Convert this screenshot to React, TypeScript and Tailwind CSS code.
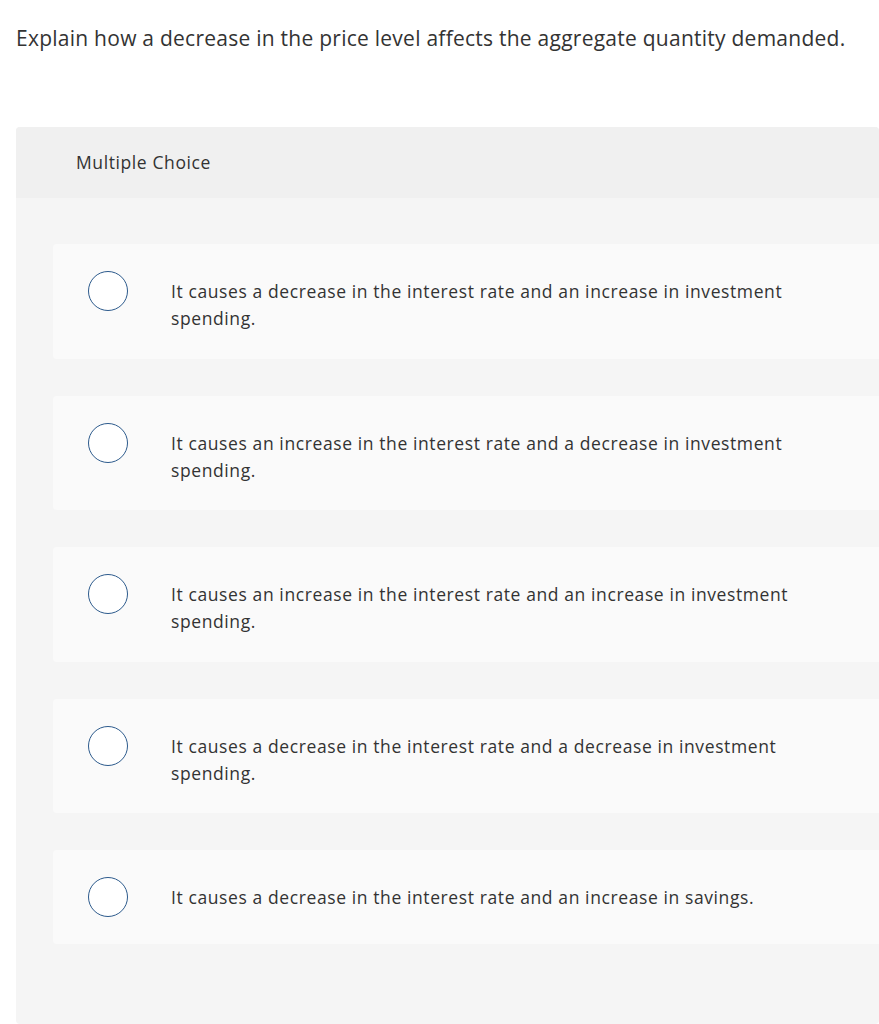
import React from 'react';

const options = [
    'It causes a decrease in the interest rate and an increase in investment spending.',
    'It causes an increase in the interest rate and a decrease in investment spending.',
    'It causes an increase in the interest rate and an increase in investment spending.',
    'It causes a decrease in the interest rate and a decrease in investment spending.',
    'It causes a decrease in the interest rate and an increase in savings.',
];

const App: React.FC = () => {
    return (
        <div className="min-h-[1024px] overflow-hidden bg-white font-['Open_Sans',sans-serif] text-[#333333]">
            <h1 className="pl-[16px] pt-[25px] text-[21px] leading-[27px] tracking-[0.25px]">
                Explain how a decrease in the price level affects the aggregate quantity demanded.
            </h1>

            <div className="ml-[16px] mt-[75px] rounded-[4px] bg-[#f5f5f5]">
                {/* Header */}
                <div className="flex h-[71px] items-center rounded-t-[4px] bg-[#f0f0f0] pl-[60px] text-[17.5px] tracking-[0.6px]">
                    Multiple Choice
                </div>

                {/* Options */}
                <div className="flex flex-col gap-[37px] pb-[80px] pl-[37px] pt-[46px]">
                    {options.map((text) => (
                        <label
                            key={text}
                            className="flex cursor-pointer items-start rounded-l-[4px] bg-[#fafafa] pb-[26.5px] pl-[35px] pt-[27px]"
                        >
                            <span className="h-[40px] w-[40px] shrink-0 rounded-full border-[1.5px] border-[#2c5a8c] bg-white" />
                            <span className="ml-[43px] mt-[7px] max-w-[630px] text-[17.5px] leading-[27px] tracking-[0.6px]">
                                {text}
                            </span>
                        </label>
                    ))}
                </div>
            </div>
        </div>
    );
};

export default App;
